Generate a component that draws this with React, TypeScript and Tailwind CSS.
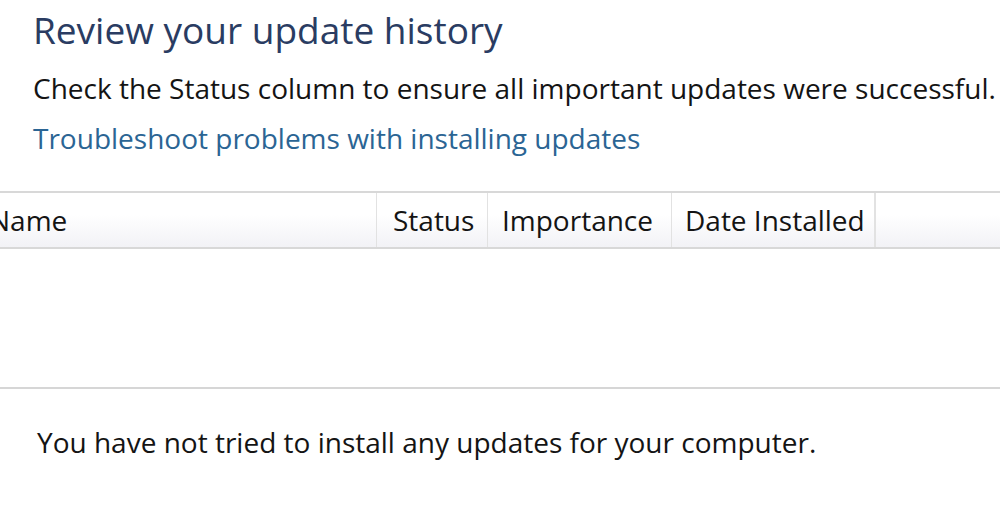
export default function App() {
  const font = { fontFamily: '"Open Sans", "Noto Sans", sans-serif' };
  return (
    <div className="w-[1000px] h-[511px] bg-white overflow-hidden" style={font}>
      <div className="pl-[33px] pt-[8px]">
        <h1 className="text-[37px] leading-[44px] text-[#2a3c62] font-normal">Review your update history</h1>
        <p className="mt-[19px] text-[28px] leading-[34px] text-[#141414]">Check the Status column to ensure all important updates were successful.</p>
        <p className="mt-[16px] text-[28px] leading-[34px] text-[#2b6594]">Troubleshoot problems with installing updates</p>
      </div>
      <div className="mt-[36px] -ml-[26px] flex h-[58px] border-t-2 border-b-2 border-[#d8d8d8] bg-gradient-to-b from-white from-40% to-[#f2f2f6] text-[28px] text-[#141414]">
        <div className="w-[403px] flex items-center pl-[15px] border-r border-[#e2e2e2]">Name</div>
        <div className="w-[111px] flex items-center pl-[16px] border-r border-[#e2e2e2]">Status</div>
        <div className="w-[184px] flex items-center pl-[14px] border-r border-[#e2e2e2]">Importance</div>
        <div className="w-[204px] flex items-center pl-[13px] border-r-2 border-[#e2e2e2]">Date Installed</div>
        <div className="flex-1" />
      </div>
      <div className="h-[138px]" />
      <div className="border-t-2 border-[#d6d6d6]" />
      <p className="pl-[37px] mt-[36px] text-[28px] leading-[34px] text-[#141414]">You have not tried to install any updates for your computer.</p>
    </div>
  );
}
